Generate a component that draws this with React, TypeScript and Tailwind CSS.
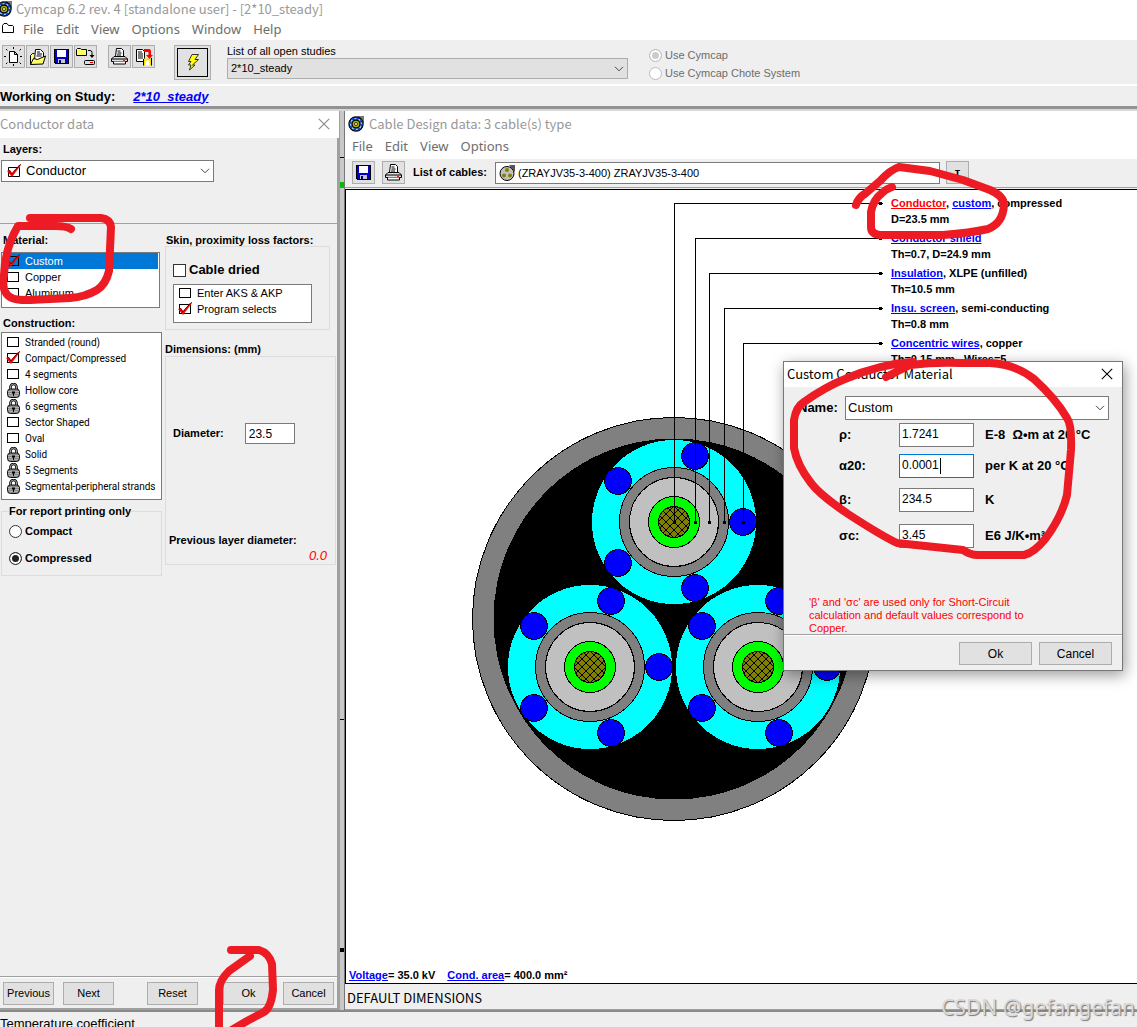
import type { ReactNode } from "react";

const materials = ["Custom", "Copper", "Aluminum"];

const constructions = [
  { name: "Stranded (round)" },
  { name: "Compact/Compressed", checked: true },
  { name: "4 segments" },
  { name: "Hollow core", locked: true },
  { name: "6 segments", locked: true },
  { name: "Sector Shaped" },
  { name: "Oval" },
  { name: "Solid", locked: true },
  { name: "5 Segments", locked: true },
  { name: "Segmental-peripheral strands", locked: true },
];

const layers = [
  { name: "Conductor", color: "text-[#ff0000]", link: "custom", rest: ", compressed", detail: "D=23.5 mm" },
  { name: "Conductor shield", color: "text-[#0000ff]", rest: "", detail: "Th=0.7, D=24.9 mm" },
  { name: "Insulation", color: "text-[#0000ff]", rest: ", XLPE (unfilled)", detail: "Th=10.5 mm" },
  { name: "Insu. screen", color: "text-[#0000ff]", rest: ", semi-conducting", detail: "Th=0.8 mm" },
  { name: "Concentric wires", color: "text-[#0000ff]", rest: ", copper", detail: "Th=0.15 mm , Wires=5" },
];

const properties = [
  { id: "rho", label: "ρ:", value: "1.7241", unit: "E-8  Ω•m at 20 °C", gap: "mt-[3px]" },
  { id: "alpha", label: "α20:", value: "0.0001", unit: "per K at 20 °C", gap: "mt-[7px]", active: true },
  { id: "beta", label: "β:", value: "234.5", unit: "K", gap: "mt-[10px]" },
  { id: "sigma", label: "σc:", value: "3.45", unit: "E6 J/K•m³", gap: "mt-3" },
];

// x of each leader line, from the conductor outwards
const leaders = [674, 695, 709, 724, 743];

const wires = [
  [69, 0],
  [21, -66],
  [-56, -41],
  [-56, 41],
  [21, 66],
];

function Chevron({ className = "" }: { className?: string }) {
  return (
    <svg className={"pointer-events-none h-[6px] w-[10px] shrink-0 " + className} viewBox="0 0 10 6" fill="none" stroke="#444">
      <path d="M1 .8l4 4 4-4" />
    </svg>
  );
}

function Close({ color }: { color: string }) {
  return (
    <svg className="h-3 w-3" viewBox="0 0 12 12" stroke={color} strokeWidth="1.1">
      <path d="M.8.8l10.4 10.4M11.2.8L.8 11.2" />
    </svg>
  );
}

function TickBox({ id, label, checked, selected }: { id: string; label: string; checked?: boolean; selected?: boolean }) {
  return (
    <label htmlFor={id} className={"flex h-4 items-center gap-[6px] pl-1 whitespace-nowrap " + (selected ? "bg-[#0078d7] text-white" : "")}>
      <span className="relative h-[10px] w-3 shrink-0">
        <input
          id={id}
          type="checkbox"
          defaultChecked={checked}
          className={"peer block h-[10px] w-3 appearance-none border border-black " + (selected ? "bg-transparent" : "bg-white")}
        />
        <svg className="pointer-events-none absolute -top-[2px] -left-[2px] hidden h-[14px] w-4 peer-checked:block" viewBox="0 0 16 14">
          <path d="M1 7l3-1 2 3 7-8h2L6 13z" fill="#f00" />
          <path d="M3 6l3 4 3-4 6-6" stroke="#600" strokeWidth=".8" fill="none" />
        </svg>
      </span>
      {label}
    </label>
  );
}

function Lock() {
  return (
    <svg className="h-[15px] w-[13px] shrink-0" viewBox="0 0 13 15">
      <path d="M3.5 7V4a3 3 0 0 1 6 0v3" fill="none" stroke="#000" strokeWidth="2.6" />
      <path d="M3.5 7V4a3 3 0 0 1 6 0v3" fill="none" stroke="#aaa" strokeWidth="1" />
      <rect x=".5" y="6" width="12" height="8.5" rx="3" fill="#888" stroke="#111" />
      <path d="M1 8.5h11M1 10.5h11M2 12.5h9" stroke="#bbb" strokeWidth=".8" />
      <path d="M5 8.5h3v2H7v2.500H6v-2.500H5z" fill="#000" />
    </svg>
  );
}

function CableIcon() {
  return (
    <svg className="h-4 w-4 shrink-0" viewBox="0 0 16 16">
      <path d="M9 0h7v8z" fill="#777" />
      <circle cx="8" cy="8" r="7" fill="#9cf" stroke="#000" strokeWidth="1.4" />
      <circle cx="8" cy="8" r="5.800" fill="none" stroke="#0040d0" strokeWidth="2" strokeDasharray="2.500 2" />
      <circle cx="8" cy="8" r="4" fill="#b0b000" stroke="#000" strokeWidth="1.400" />
      <circle cx="8" cy="8" r="1.600" fill="#e8e060" stroke="#222" strokeWidth=".8" />
    </svg>
  );
}

function ThreeCoreIcon() {
  return (
    <svg className="h-4 w-4 shrink-0" viewBox="0 0 16 16">
      <path d="M10 0h6v7z" fill="#555" />
      <circle cx="8" cy="8.500" r="7" fill="#c0c0c0" stroke="#000" />
      <circle cx="8" cy="5" r="2" fill="#808000" />
      <circle cx="5" cy="10.500" r="2" fill="#808000" />
      <circle cx="11" cy="10.500" r="2" fill="#808000" />
    </svg>
  );
}

function Floppy() {
  return (
    <svg className="h-[15px] w-[15px]" viewBox="0 0 15 15" shapeRendering="crispEdges">
      <path d="M.5.5h14v14H2l-1.500-1.500z" fill="#0000c8" stroke="#000" />
      <path d="M3 1h9v7H3z" fill="#fff" />
      <path d="M4 10h7v4H4z" fill="#c8c8c8" />
      <path d="M5 11h2v3H5z" fill="#000080" />
    </svg>
  );
}

function Printer() {
  return (
    <svg className="h-[17px] w-[17px]" viewBox="0 0 17 17" fill="#fff" stroke="#000">
      <path d="M4.500 8.500L5.500.5h5l2 2v6" />
      <path d="M6.500 3h3M6.500 5h4M6 7h4" />
      <path d="M3 8.500h11l2.500 2.500v2.500H.5V11z" fill="#ddd" />
      <path d="M.5 11h16M2.500 13.500v2.500h12v-2.500" />
      <path d="M12 12.300h2" stroke="#d00" />
    </svg>
  );
}

function NewDoc() {
  return (
    <svg className="h-[19px] w-[19px]" viewBox="0 0 19 19" fill="#fff" stroke="#000">
      <path d="M5.500 4.500h5l3 3v8h-8zM10.500 4.500v3h3" />
      <path d="M9.500 0v2M9.500 17v2M2 2l2 2M17 2l-2 2M0 9.500h3M16 9.500h3M2 17l2-2M17 17l-2-2" strokeDasharray="2 1" />
    </svg>
  );
}

function OpenDoc() {
  return (
    <svg className="h-[18px] w-[18px]" viewBox="0 0 18 18" stroke="#000">
      <path d="M1.500 16.500V7.500l2-2h2" fill="#ffff80" />
      <path d="M5.500 12L6.500 1.500h5l3 3V12z" fill="#fff" />
      <path d="M8 4h3M8 6h5M7.500 8h5" />
      <path d="M1.500 16.500l3-6 4 1 8-3.500-2.500 8z" fill="#ffff66" />
    </svg>
  );
}

function FolderToDisk() {
  return (
    <svg className="h-[19px] w-[19px]" viewBox="0 0 19 19" stroke="#000">
      <path d="M.5 8.500v-6l1-1h3l1 1h5v6z" fill="#ffff66" />
      <path d="M12 3.500h2q2 0 2 2v4" fill="none" />
      <path d="M13.500 8h5L16 11z" fill="#000" stroke="none" />
      <rect x="8.500" y="13.500" width="10" height="4" rx="1" fill="#ddd" />
      <path d="M14 15.500h3" stroke="#e00" />
    </svg>
  );
}

function DocToDisk() {
  return (
    <svg className="h-[18px] w-[18px]" viewBox="0 0 18 18" stroke="#000">
      <path d="M1.500 13.500v-12h6l2 2v10z" fill="#fff" />
      <path d="M3 4h4M3 6h5M3 8h5M3 10h5" />
      <path d="M8.500 10.500h8v7h-8z" fill="#f5e000" stroke="none" />
      <path d="M10.500 12.500h4v5h-4z" fill="#fff" stroke="none" />
      <path d="M8.500 11v6.500M16.500 10v7.500" />
      <path d="M9 1h5q2 0 2 3v3h2l-3.500 4L11 7h2.500V4H9z" fill="#f00" stroke="none" />
    </svg>
  );
}

function ToolButton({ label, children }: { label: string; children: ReactNode }) {
  return (
    <button aria-label={label} className="flex h-[23px] w-[23px] items-center justify-center border border-[#adadad] bg-[#e1e1e1]">
      {children}
    </button>
  );
}

function PushButton({ children, className }: { children: ReactNode; className: string }) {
  return <button className={"h-[23px] border border-[#adadad] bg-[#e1e1e1] " + className}>{children}</button>;
}

function Menu({ items }: { items: string[] }) {
  return (
    <nav className="flex gap-3 font-['Noto_Sans'] text-[13px] leading-5 text-[#6d6d6d]">
      {items.map((item) => (
        <a key={item} href="#">{item}</a>
      ))}
    </nav>
  );
}

function MainHeader() {
  return (
    <header className="shrink-0">
      <div className="flex h-[18px] items-center gap-1 overflow-hidden bg-white font-['Noto_Sans_CJK_SC',sans-serif] text-[13px] leading-4 text-[#999]">
        <span className="-ml-1"><CableIcon /></span>
        <h1>Cymcap 6.2 rev. 4 [standalone user] - [2*10_steady]</h1>
      </div>
      <div className="flex h-[21px] items-center gap-[9px] bg-white pl-[2px]">
        <svg className="h-[11px] w-3" viewBox="0 0 12 11">
          <path d="M.5 9.500v-7l1.500-2h3l1.500 2h4l1 1v6z" fill="#fff" stroke="#000" />
        </svg>
        <Menu items={["File", "Edit", "View", "Options", "Window", "Help"]} />
      </div>
      <div className="flex h-[47px] border-b-2 border-white bg-[#efefef] pt-[6px] pl-[2px] shadow-[inset_0_1px_0_#fff]">
        <div className="flex gap-px">
          <ToolButton label="New"><NewDoc /></ToolButton>
          <ToolButton label="Open"><OpenDoc /></ToolButton>
          <ToolButton label="Save"><Floppy /></ToolButton>
          <ToolButton label="Save as"><FolderToDisk /></ToolButton>
        </div>
        <div className="ml-[11px] flex gap-px">
          <ToolButton label="Print"><Printer /></ToolButton>
          <ToolButton label="Export"><DocToDisk /></ToolButton>
        </div>
        <button aria-label="Run" className="ml-[19px] h-[35px] w-[37px] border border-[#adadad] bg-[#e1e1e1] p-[2px]">
          <span className="flex h-full items-center justify-center border border-black">
            <svg className="h-[17px] w-[14px]" viewBox="0 0 14 17" fill="#ffff00" stroke="#333">
              <path d="M6 .5h6.500L9 5.500h3.500L6.500 11H9l-5.500 5 1.500-5H2.500L5 7.500H2.500z" />
            </svg>
          </span>
        </button>
        <div className="ml-4 flex flex-col text-[11px]">
          <label htmlFor="study" className="h-[13px] leading-3">List of all open studies</label>
          <div className="relative flex items-center">
            <select id="study" className="h-[21px] w-[401px] appearance-none border border-[#adadad] bg-[#e1e1e1] pl-[3px]">
              <option>2*10_steady</option>
            </select>
            <Chevron className="absolute right-1" />
          </div>
        </div>
        <div className="ml-[21px] flex flex-col gap-[2px] pt-[2px] text-[11px] text-[#6d6d6d]">
          <label className="flex h-4 items-center gap-[3px]">
            <input type="radio" name="engine" defaultChecked className="h-[13px] w-[13px] appearance-none rounded-full border border-[#bbb] bg-[#ccc] shadow-[inset_0_0_0_2px_#fff]" />
            Use Cymcap
          </label>
          <label className="flex h-4 items-center gap-[3px]">
            <input type="radio" name="engine" className="h-[13px] w-[13px] appearance-none rounded-full border border-[#bbb] bg-white" />
            Use Cymcap Chote System
          </label>
        </div>
      </div>
      <div className="flex h-[20px] items-center gap-[18px] bg-[#efefef] pt-px text-[13px] leading-4 font-bold">
        <span>Working on Study:</span>
        <a href="#" className="text-[#0000ff] italic underline">2*10_steady</a>
      </div>
      <div className="h-[5px] border-t-[3px] border-[#929292] bg-[#d8d8d8]" />
    </header>
  );
}

function ConductorPanel() {
  return (
    <section className="flex w-[340px] shrink-0 flex-col border-r-[3px] border-[#a0a0a0] bg-[#efefef] text-[11px]">
      <div className="-mr-[2px] flex h-[27px] shrink-0 items-center justify-between bg-white pr-[9px] pb-px font-['Noto_Sans_CJK_SC',sans-serif] text-[13px] leading-4 text-[#999]">
        <h2>Conductor data</h2>
        <button aria-label="Close"><Close color="#888" /></button>
      </div>
      <div className="h-[86px] shrink-0 border-b border-[#a0a0a0] pt-[3px] pl-px">
        <label htmlFor="layer" className="block pl-[2px] leading-4 font-bold">Layers:</label>
        <div className="relative mt-[3px] flex h-[22px] w-[213px] items-center border border-[#7a7a7a] bg-white pl-1">
          <svg className="pointer-events-none absolute h-[14px] w-4" viewBox="0 0 16 14">
            <path d="M2.500 3.500h11v9h-11z" fill="#fff" stroke="#000" />
            <path d="M1 7l3-1 2 3 7-8h2L6 13z" fill="#f00" />
            <path d="M3 6l3 4 3-4 6-6" stroke="#600" strokeWidth=".8" fill="none" />
          </svg>
          <select id="layer" className="h-5 w-full appearance-none pl-5 text-[13px] leading-5">
            <option>Conductor</option>
          </select>
          <Chevron className="absolute right-[3px]" />
        </div>
      </div>
      <div className="flex min-h-0 flex-1 pt-2 pl-px">
        <div className="w-[164px] shrink-0">
          <h3 className="pl-[2px] leading-4 font-bold">Material:</h3>
          <div className="mt-1 h-[56px] w-[159px] border border-[#7a7a7a] bg-white px-px">
            {materials.map((name, i) => (
              <TickBox key={name} id={"material-" + i} label={name} checked={i === 0} selected={i === 0} />
            ))}
          </div>
          <h3 className="mt-[7px] pl-[2px] leading-4 font-bold">Construction:</h3>
          <div className="mt-px h-[168px] w-[161px] overflow-hidden border border-[#7a7a7a] bg-white pt-px pl-px font-['Roboto'] text-[10px]">
            {constructions.map((item, i) =>
              item.locked ? (
                <div key={item.name} className="flex h-4 items-center gap-[5px] pl-1 whitespace-nowrap">
                  <Lock />
                  {item.name}
                </div>
              ) : (
                <TickBox key={item.name} id={"construction-" + i} label={item.name} checked={item.checked} />
              ),
            )}
          </div>
          <fieldset className="mt-[3px] h-[73px] w-[161px] border border-[#dcdcdc] pl-[7px] font-bold">
            <legend className="leading-4">For report printing only</legend>
            <label className="mt-1 flex h-4 items-center gap-[3px]">
              <input type="radio" name="report" className="h-[13px] w-[13px] appearance-none rounded-full border border-[#333] bg-white" />
              Compact
            </label>
            <label className="mt-[11px] flex h-4 items-center gap-[3px]">
              <input type="radio" name="report" defaultChecked className="h-[13px] w-[13px] appearance-none rounded-full border border-[#333] bg-[#222] shadow-[inset_0_0_0_2px_#fff]" />
              Compressed
            </label>
          </fieldset>
        </div>
        <div className="flex-1">
          <h3 className="pl-px leading-4 font-bold whitespace-nowrap">Skin, proximity loss factors:</h3>
          <div className="-mt-[2px] h-[84px] w-[165px] border border-[#dcdcdc] pt-[14px] pl-[7px]">
            <label className="flex h-[18px] items-center gap-[3px] text-[13px] font-bold">
              <input type="checkbox" className="h-[13px] w-[13px] appearance-none border border-[#333] bg-white" />
              Cable dried
            </label>
            <div className="mt-[5px] h-[39px] w-[139px] border border-[#7a7a7a] bg-white px-px">
              <TickBox id="aks" label="Enter AKS & AKP" />
              <TickBox id="program" label="Program selects" checked />
            </div>
          </div>
          <h3 className="mt-[11px] leading-4 font-bold">Dimensions: (mm)</h3>
          <div className="-mt-px flex h-[209px] w-[171px] flex-col justify-between border border-[#dcdcdc] pt-[66px] pr-2">
            <div className="flex items-center gap-[21px] pl-[7px]">
              <label htmlFor="diameter" className="font-bold">Diameter:</label>
              <input id="diameter" defaultValue="23.5" className="h-[21px] w-[50px] border border-[#7a7a7a] bg-white px-[3px] text-xs" />
            </div>
            <div>
              <p className="pl-[3px] leading-4 font-bold">Previous layer diameter:</p>
              <output className="block text-right text-[13px] leading-4 text-[#ff0000] italic">0.0</output>
            </div>
          </div>
        </div>
      </div>
      <div className="flex h-[34px] shrink-0 gap-[9px] border-t border-b-2 border-t-[#a0a0a0] border-b-[#a0a0a0] pt-[5px] pl-[3px] shadow-[inset_0_1px_0_#fff]">
        <PushButton className="w-[51px]">Previous</PushButton>
        <PushButton className="w-[51px]">Next</PushButton>
        <PushButton className="ml-6 w-[51px]">Reset</PushButton>
        <PushButton className="ml-4 w-[51px]">Ok</PushButton>
        <PushButton className="w-[51px]">Cancel</PushButton>
      </div>
    </section>
  );
}

function Core({ cx, cy }: { cx: number; cy: number }) {
  return (
    <g transform={`translate(${cx} ${cy})`} stroke="#000">
      <circle r="82.500" fill="#00ffff" />
      <circle r="54.500" fill="#808080" />
      <circle r="44.500" fill="#c0c0c0" />
      <circle r="25.500" fill="#00ff00" />
      <circle r="15.500" fill="#808000" />
      <circle r="15.500" fill="url(#hatch)" />
      {wires.map(([x, y]) => (
        <circle key={`${x},${y}`} cx={x} cy={y} r="13.300" fill="#0000ff" />
      ))}
    </g>
  );
}

function CableDrawing() {
  return (
    <svg className="pointer-events-none absolute top-0 left-0 h-[660px] w-[560px]" viewBox="346 190 560 660" shapeRendering="crispEdges">
      <defs>
        <pattern id="hatch" width="8" height="8" patternUnits="userSpaceOnUse">
          <path d="M-1-1L9 9M9-1L-1 9" stroke="#000" />
        </pattern>
      </defs>
      <circle cx="674" cy="619" r="201.500" fill="#808080" stroke="#000" />
      <circle cx="674" cy="619" r="180.500" fill="#000" />
      <Core cx={674} cy={522} />
      <Core cx={590} cy={667} />
      <Core cx={758} cy={667} />
      {leaders.map((x, i) => {
        const y = 203 + i * 35;
        return (
          <g key={x}>
            <path d={`M${x + 0.5} 522V${y + 0.5}H881`} fill="none" stroke="#000" />
            <rect x={x - 1} y="521" width="3" height="3" />
            <rect x="879" y={y - 1} width="3" height="3" />
            <rect x="878" y={y} width="5" height="1" />
          </g>
        );
      })}
    </svg>
  );
}

function CableWindow() {
  return (
    <section className="flex min-w-0 flex-1 flex-col border-l border-[#777] bg-[#efefef]">
      <div className="flex h-[25px] shrink-0 items-center gap-[5px] bg-white pl-[3px] font-['Noto_Sans_CJK_SC',sans-serif] text-[13px] leading-4 text-[#999]">
        <CableIcon />
        <h2>Cable Design data: 3 cable(s) type</h2>
      </div>
      <div className="flex h-[21px] shrink-0 bg-white pl-[7px]">
        <Menu items={["File", "Edit", "View", "Options"]} />
      </div>
      <div className="flex h-[31px] shrink-0 items-center border-b border-[#a0a0a0] pt-px pl-[7px] shadow-[inset_0_2px_0_#fff]">
        <ToolButton label="Save design"><Floppy /></ToolButton>
        <span className="ml-[7px]"><ToolButton label="Print design"><Printer /></ToolButton></span>
        <label htmlFor="cables" className="mr-2 ml-2 text-[11px] font-bold whitespace-nowrap">List of cables:</label>
        <div className="relative flex h-[22px] w-[445px] items-center border border-[#7a7a7a] bg-white pl-[3px]">
          <ThreeCoreIcon />
          <select id="cables" className="h-5 w-full appearance-none pl-[3px] text-[11px] leading-5">
            <option>(ZRAYJV35-3-400) ZRAYJV35-3-400</option>
          </select>
          <Chevron className="absolute right-[3px]" />
        </div>
        <button aria-label="More" className="ml-[6px] h-[23px] w-[23px] border border-[#adadad] bg-[#e1e1e1] text-[11px] font-bold">т</button>
      </div>
      <div className="relative mt-px flex flex-1 flex-col justify-between border-y border-l border-black bg-white text-[11px] font-bold">
        <CableDrawing />
        <ul className="relative pt-[5px] pl-[545px] leading-4 whitespace-nowrap">
          {layers.map((layer) => (
            <li key={layer.name} className="mb-[3px]">
              <a href="#" className={"underline " + layer.color}>{layer.name}</a>
              {layer.link && <>, <a href="#" className="text-[#0000ff] underline">{layer.link}</a></>}
              {layer.rest}
              <p>{layer.detail}</p>
            </li>
          ))}
        </ul>
        <p className="pl-[3px] leading-4">
          <a href="#" className="text-[#0000ff] underline">Voltage</a>= 35.0 kV
          <a href="#" className="ml-3 text-[#0000ff] underline">Cond. area</a>= 400.0 mm²
        </p>
      </div>
      <div className="flex h-[26px] shrink-0 items-center border-b border-[#a0a0a0] pt-[2px] pl-[2px] font-['Noto_Sans_CJK_SC',sans-serif] text-[13px] leading-4">DEFAULT DIMENSIONS</div>
    </section>
  );
}

function MaterialDialog() {
  return (
    <div role="dialog" aria-label="Custom Conductor Material" className="absolute top-[361px] left-[783px] flex h-[310px] w-[340px] flex-col border border-[#777] bg-[#efefef] shadow-[2px_4px_14px_rgba(0,0,0,0.4)]">
      <div className="flex h-[25px] shrink-0 items-center justify-between bg-white pr-[9px] pb-px pl-[3px] font-['Noto_Sans_CJK_SC',sans-serif] text-[13px] leading-4">
        <h2>Custom Conductor Material</h2>
        <button aria-label="Close dialog"><Close color="#000" /></button>
      </div>
      <div className="flex-1 overflow-hidden pt-[9px] pl-[14px]">
        <div className="flex items-center text-[13px]">
          <label htmlFor="name" className="w-[47px] font-bold">Name:</label>
          <div className="relative flex items-center">
            <select id="name" className="h-6 w-[264px] appearance-none border border-[#7a7a7a] bg-white pl-[2px]">
              <option>Custom</option>
            </select>
            <Chevron className="absolute right-1" />
          </div>
        </div>
        {properties.map((p) => (
          <div key={p.id} className={"flex items-center pl-[41px] text-[13px] " + p.gap}>
            <label htmlFor={p.id} className="w-[60px] font-bold">{p.label}</label>
            <span className="relative">
              <input
                id={p.id}
                defaultValue={p.value}
                className={"block h-6 w-[75px] border bg-white pb-[2px] pl-[2px] text-xs " + (p.active ? "border-[#0078d7]" : "border-[#7a7a7a]")}
              />
              {p.active && <span className="absolute top-1 left-[41px] h-4 w-px bg-black" />}
            </span>
            <span className="ml-[11px] font-bold whitespace-pre">{p.unit}</span>
          </div>
        ))}
        <p className="mt-12 ml-[11px] w-[230px] text-[11px] leading-[13px] text-[#ff0000]">
          'β' and 'σc' are used only for Short-Circuit calculation and default values correspond to Copper.
        </p>
      </div>
      <div className="flex h-[36px] shrink-0 justify-end gap-[7px] border-t border-[#a0a0a0] pt-[7px] pr-[10px] text-xs shadow-[inset_0_1px_0_#fff]">
        <PushButton className="w-[73px]">Ok</PushButton>
        <PushButton className="w-[73px]">Cancel</PushButton>
      </div>
    </div>
  );
}

function Markings() {
  return (
    <svg
      className="pointer-events-none absolute top-0 left-0 h-[1027px] w-[1137px]"
      viewBox="0 0 1137 1027"
      fill="none"
      stroke="#ed1c24"
      strokeWidth="8"
      strokeLinecap="round"
      strokeLinejoin="round"
    >
      <path d="M30 218H101Q110 219 111 227L109 271Q106 284 97 290Q85 297 70 298L30 300Q10 301 6 293Q2 288 4 275Q5 248 18 226H56Q66 226 71 229" />
      <path d="M856 205Q858 198 866 193L880 181Q890 170 899 167L930 171L963 180L990 190Q1004 196 1004 205Q1003 223 988 229Q970 233 943 235H880Q871 234 871 227V212Q873 200 882 193Q886 189 892 187" />
      <path d="M886 377L910 365Q935 362 960 363H990Q1015 364 1034 379Q1056 399 1067 418Q1072 425 1071 450L1067 495Q1062 516 1046 538Q1034 553 1024 555H978Q970 555 963 550L897 543Q882 536 848 514Q820 495 811 483Q797 465 794 448V420Q796 407 804 402Q825 387 845 379Q880 364 913 362" />
      <path d="M231 950H259Q269 953 272 964L273 990Q271 1008 264 1012L247 1021L230 1031M250 956L229 971Q219 981 219 990V1031" />
    </svg>
  );
}

export default function App() {
  return (
    <div className="relative flex h-screen flex-col overflow-hidden bg-[#efefef] font-['Liberation_Sans',sans-serif] text-black">
      <MainHeader />
      <main className="flex min-h-0 flex-1 bg-[#c8c8c8]">
        <ConductorPanel />
        <div className="flex w-1 shrink-0 flex-col pt-[46px] pb-[58px]">
          <div className="border-t border-black pt-6">
            <div className="h-[6px] border-b border-[#777] bg-[#00c000]" />
          </div>
          <div className="flex-[7]" />
          <div className="h-px bg-black" />
          <div className="flex-[3]" />
          <div className="h-1 bg-black" />
        </div>
        <CableWindow />
      </main>
      <footer className="h-[17px] shrink-0 overflow-hidden border-t-2 border-[#8a8a8a] bg-[#efefef] pt-1 text-[13px] leading-4 whitespace-nowrap">
        Temperature coefficient
      </footer>
      <MaterialDialog />
      <Markings />
      <div className="absolute right-[2px] bottom-2 font-['Noto_Sans'] text-[21px] leading-6 text-[#d8d8d8] [text-shadow:1px_1px_1px_#777]">CSDN @gefangefan</div>
    </div>
  );
}
